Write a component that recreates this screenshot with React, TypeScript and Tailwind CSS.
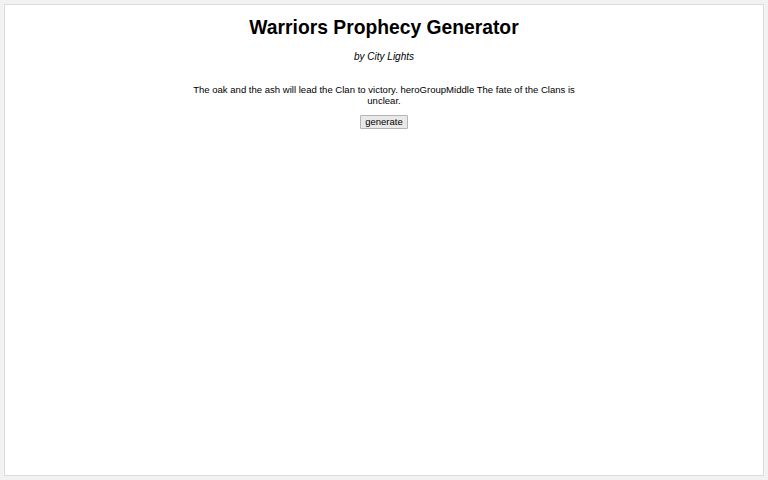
export default function App() {
  return (
    <div className="w-[768px] h-[480px] bg-[#f2f2f2] p-[4px]" style={{ fontFamily: '"Liberation Sans", Arial, sans-serif' }}>
      <div className="h-[472px] bg-white border border-[#dcdcdc] flex flex-col items-center">
        <h1 className="mt-[11px] text-[19.3px] leading-[24px] font-bold text-black">Warriors Prophecy Generator</h1>
        <p className="mt-[11px] text-[10px] leading-[12px] italic text-black">by City Lights</p>
        <p className="mt-[21px] w-[400px] text-center text-[9.55px] leading-[11px] text-black">
          The oak and the ash will lead the Clan to victory. heroGroupMiddle The fate of the Clans is unclear.
        </p>
        <button className="mt-[9px] h-[14px] px-[4px] text-[9.5px] leading-[12px] text-black bg-[#e9e9e9] border border-[#b5b5b5] rounded-[1px]">
          generate
        </button>
      </div>
    </div>
  );
}
